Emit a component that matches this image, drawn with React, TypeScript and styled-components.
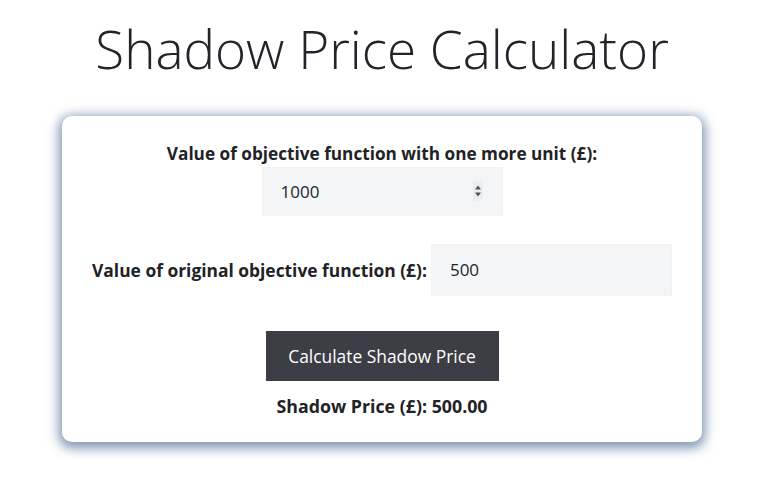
import React, { useState } from 'react'
import styled, { createGlobalStyle } from 'styled-components'

const GlobalStyle = createGlobalStyle`
  html, body {
    margin: 0;
    padding: 0;
    background: #ffffff;
  }
  body {
    font-family: 'Open Sans', 'Noto Sans', sans-serif;
    color: #212529;
  }
  * {
    box-sizing: border-box;
  }
`

const Page = styled.div`
  display: flex;
  flex-direction: column;
  align-items: center;
  padding: 17px 4px 40px 0;
`

const Title = styled.h1`
  margin: 0;
  font-size: 53px;
  font-weight: 300;
  line-height: 1.2;
  color: #212529;
`

const Card = styled.div`
  width: 640px;
  margin-top: 35px;
  padding: 26px 20px 24px;
  background: #ffffff;
  border-radius: 10px;
  box-shadow: 0 3px 12px 3px rgba(55, 90, 135, 0.65);
  display: flex;
  flex-direction: column;
  align-items: center;
`

const Field = styled.div`
  display: flex;
  flex-direction: column;
  align-items: center;
  gap: 2px;
`

const Row = styled.div`
  display: flex;
  align-items: center;
  gap: 4px;
  margin-top: 28px;
`

const Label = styled.label<{ $size: number }>`
  font-size: ${(p) => p.$size}px;
  font-weight: 700;
  color: #1f2226;
`

const InputWrap = styled.div`
  position: relative;
`

const Input = styled.input<{ $h: number }>`
  width: 241px;
  height: ${(p) => p.$h}px;
  padding: 0 18px;
  border: 1px solid #f1f2f4;
  background: #f4f5f7;
  font-family: inherit;
  font-size: 17px;
  color: #212529;
  outline: none;
  -moz-appearance: textfield;
  &::-webkit-outer-spin-button,
  &::-webkit-inner-spin-button {
    -webkit-appearance: none;
    margin: 0;
  }
`

const Spinner = styled.span`
  position: absolute;
  right: 20px;
  top: 50%;
  transform: translateY(-50%);
  width: 10px;
  height: 20px;
  display: flex;
  align-items: center;
  justify-content: center;
  background: #eceef1;
`

const Button = styled.button`
  margin-top: 35px;
  width: 233px;
  height: 50px;
  border: none;
  background: #3d3d45;
  color: #ffffff;
  font-family: inherit;
  font-size: 17.4px;
  cursor: pointer;
`

const Result = styled.div`
  margin-top: 13px;
  font-size: 17.8px;
  font-weight: 700;
  color: #1f2226;
`

const App = () => {
  const [more, setMore] = useState('1000')
  const [orig, setOrig] = useState('500')
  const price = (parseFloat(more) || 0) - (parseFloat(orig) || 0)

  return (
    <>
      <GlobalStyle />
      <Page>
        <Title>Shadow Price Calculator</Title>
        <Card>
          <Field>
            <Label htmlFor="more" $size={17.2}>
              Value of objective function with one more unit (£):
            </Label>
            <InputWrap>
              <Input
                id="more"
                type="number"
                $h={49}
                value={more}
                onChange={(e) => setMore(e.target.value)}
              />
              <Spinner>
                <svg width="8" height="16" viewBox="0 0 8 16">
                  <path d="M4 2.5 L7 6.5 L1 6.5 Z" fill="#4f535a" />
                  <path d="M4 13.5 L7 9.5 L1 9.5 Z" fill="#4f535a" />
                </svg>
              </Spinner>
            </InputWrap>
          </Field>
          <Row>
            <Label htmlFor="orig" $size={17.4}>
              Value of original objective function (£):
            </Label>
            <Input
              id="orig"
              type="number"
              $h={52}
              value={orig}
              onChange={(e) => setOrig(e.target.value)}
            />
          </Row>
          <Button>Calculate Shadow Price</Button>
          <Result>Shadow Price (£): {price.toFixed(2)}</Result>
        </Card>
      </Page>
    </>
  )
}

export default App
